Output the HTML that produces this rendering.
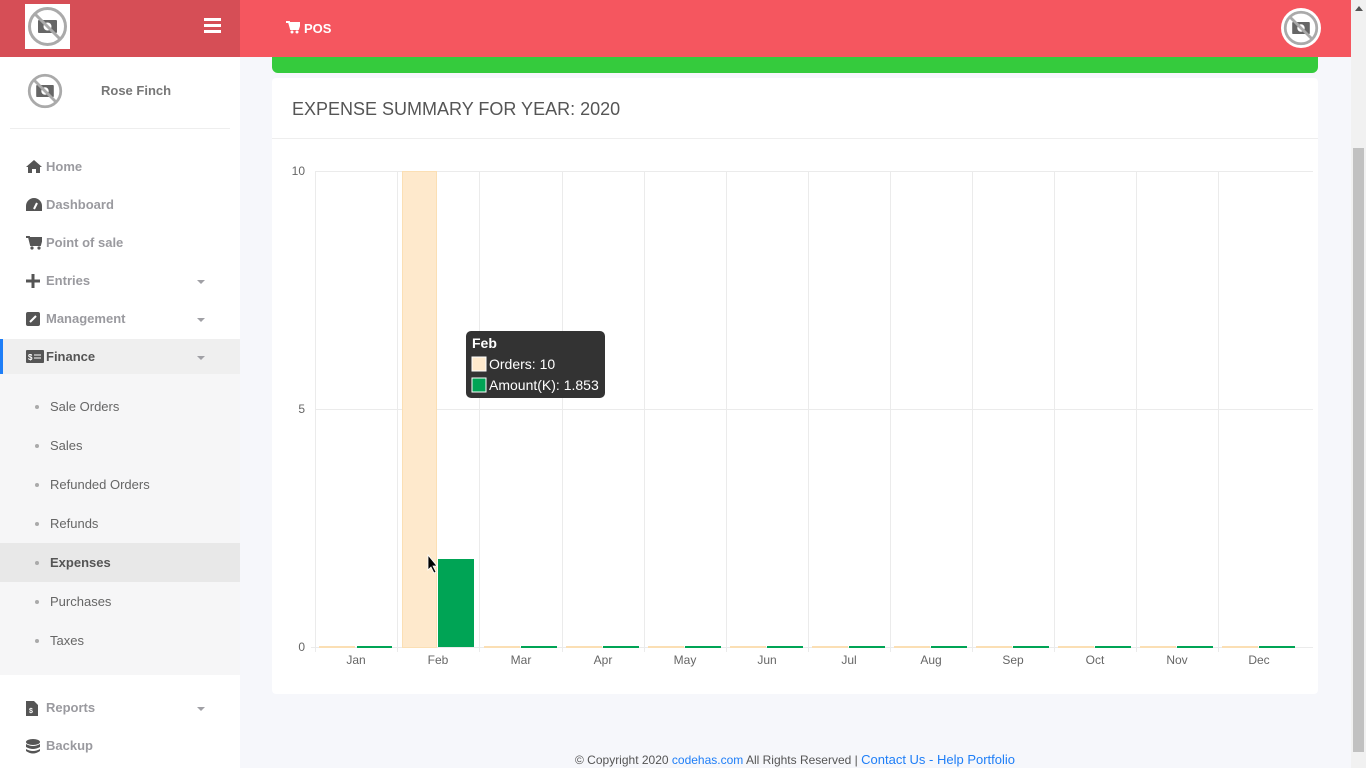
<!DOCTYPE html>
<html><head><meta charset="utf-8"><style>
*{box-sizing:border-box;margin:0;padding:0}
body{width:1366px;height:768px;overflow:hidden;font-family:"Liberation Sans",sans-serif;background:#f6f7fb;position:relative}
.tl{position:absolute;left:0;top:0;width:240px;height:57px;background:#d64e56}
.tr{position:absolute;left:240px;top:0;width:1111px;height:57px;background:#f5565f}
.side{position:absolute;left:0;top:57px;width:240px;height:711px;background:#fff}
.nav{position:absolute;left:0;width:240px;height:36px;font-size:13px;font-weight:bold;color:#9a9a9f;line-height:36px;padding-left:46px}
.nav svg{position:absolute;left:26px;top:11px}
.caret{position:absolute;left:197px;top:17px;width:0;height:0;border-left:4px solid transparent;border-right:4px solid transparent;border-top:4px solid #a0a0a5}
.sub{position:absolute;left:0;width:240px;height:39px;line-height:39px;font-size:13px;color:#666;padding-left:50px}
.sub:before{content:"";position:absolute;left:35px;top:18px;width:4px;height:4px;border-radius:50%;background:#aaa}
.sb{position:absolute;left:1351px;top:0;width:15px;height:768px;background:#f1f1f1}
</style></head><body>
<div class="tl"><div style="position:absolute;left:25px;top:4px;width:45px;height:45px;background:#fff"></div>
<svg style="position:absolute;left:27px;top:6px" width="41" height="41" viewBox="0 0 41 41"><circle cx="20.5" cy="20.5" r="18" fill="none" stroke="#aaa" stroke-width="3"/><rect x="11" y="14" width="19" height="13" rx="1" fill="#666"/><circle cx="20.5" cy="20.5" r="4" fill="#fff"/><line x1="8" y1="8" x2="33" y2="33" stroke="#aaa" stroke-width="3"/></svg>
<div style="position:absolute;left:204px;top:18px;width:17px;height:3px;background:#fff;box-shadow:0 6px 0 #fff,0 12px 0 #fff"></div></div>
<div class="tr">
<svg style="position:absolute;left:46px;top:21px" width="14" height="13" viewBox="0 0 14 13"><path d="M0 1h3l2 7h7l2-6H4" fill="none" stroke="#fff" stroke-width="2"/><rect x="4" y="3" width="9" height="4" fill="#fff"/><circle cx="6" cy="11" r="1.5" fill="#fff"/><circle cx="11" cy="11" r="1.5" fill="#fff"/></svg>
<div style="position:absolute;left:64px;top:21px;font-size:13px;font-weight:bold;color:#fff">POS</div>
<div style="position:absolute;left:1041px;top:8px;width:40px;height:40px;border-radius:50%;background:#fff"></div>
<svg style="position:absolute;left:1042px;top:9px" width="38" height="38" viewBox="0 0 41 41"><circle cx="20.5" cy="20.5" r="17" fill="none" stroke="#aaa" stroke-width="3"/><rect x="11" y="14" width="19" height="13" rx="1" fill="#666"/><circle cx="20.5" cy="20.5" r="4" fill="#fff"/><line x1="9" y1="9" x2="32" y2="32" stroke="#aaa" stroke-width="3"/></svg></div>
<div class="side">
<svg style="position:absolute;left:26px;top:15px" width="38" height="38" viewBox="0 0 41 41"><circle cx="20.5" cy="20.5" r="17" fill="none" stroke="#aaa" stroke-width="3"/><rect x="11" y="14" width="19" height="13" rx="1" fill="#666"/><circle cx="20.5" cy="20.5" r="4" fill="#fff"/><line x1="9" y1="9" x2="32" y2="32" stroke="#aaa" stroke-width="3"/></svg>
<div style="position:absolute;left:101px;top:26px;font-size:13px;font-weight:bold;color:#777">Rose Finch</div>
<div style="position:absolute;left:10px;top:71px;width:220px;height:1px;background:#eee"></div>
<div class="nav" style="top:92px"><svg width="16" height="13" viewBox="0 0 16 13"><path d="M8 0L0 7h2v6h4V9h4v4h4V7h2z" fill="#555"/></svg>Home</div>
<div class="nav" style="top:130px"><svg width="16" height="14" viewBox="0 0 16 14"><path d="M8 0a8 8 0 0 0-8 8v5h16V8a8 8 0 0 0-8-8z" fill="#555"/><path d="M8 11l3-6" stroke="#fff" stroke-width="2"/></svg>Dashboard</div>
<div class="nav" style="top:168px"><svg width="16" height="14" viewBox="0 0 16 14"><path d="M0 1h3l2 8h9l2-7H4" fill="none" stroke="#555" stroke-width="2"/><rect x="4" y="3" width="11" height="5" fill="#555"/><circle cx="6" cy="12" r="1.6" fill="#555"/><circle cx="13" cy="12" r="1.6" fill="#555"/></svg>Point of sale</div>
<div class="nav" style="top:206px"><svg width="14" height="14" viewBox="0 0 14 14"><path d="M7 0v14M0 7h14" stroke="#555" stroke-width="3"/></svg>Entries<span class="caret"></span></div>
<div class="nav" style="top:244px"><svg width="14" height="14" viewBox="0 0 14 14"><rect width="14" height="14" rx="2" fill="#555"/><path d="M4 10l6-6" stroke="#fff" stroke-width="2"/></svg>Management<span class="caret"></span></div>
<div class="nav" style="top:282px;background:#efefef;color:#555;height:35px"><div style="position:absolute;left:0;top:0;width:3px;height:35px;background:#1e7ef7"></div><svg width="18" height="13" viewBox="0 0 18 13"><rect width="18" height="13" rx="1" fill="#555"/><path d="M8 5h7M8 8h7" stroke="#fff"/><text x="2" y="10" font-size="8" fill="#fff" font-family="Liberation Sans">$</text></svg>Finance<span class="caret"></span></div>
<div style="position:absolute;left:0;top:317px;width:240px;height:301px;background:#f6f6f7"></div>
<div class="sub" style="top:330px">Sale Orders</div>
<div class="sub" style="top:369px">Sales</div>
<div class="sub" style="top:408px">Refunded Orders</div>
<div class="sub" style="top:447px">Refunds</div>
<div class="sub" style="top:486px;background:#e8e8e8;font-weight:bold;color:#555">Expenses</div>
<div class="sub" style="top:525px">Purchases</div>
<div class="sub" style="top:564px">Taxes</div>
<div class="nav" style="top:633px"><svg width="12" height="15" viewBox="0 0 12 15"><path d="M0 0h8l4 4v11H0z" fill="#555"/><text x="3" y="12" font-size="7" fill="#fff" font-family="Liberation Sans">$</text></svg>Reports<span class="caret"></span></div>
<div class="nav" style="top:671px"><svg width="14" height="15" viewBox="0 0 14 15"><ellipse cx="7" cy="3" rx="7" ry="3" fill="#555"/><path d="M0 5q7 4 14 0v3q-7 4-14 0zM0 10q7 4 14 0v2q-7 5-14 0z" fill="#555"/></svg>Backup</div>
</div>
<div style="position:absolute;left:272px;top:57px;width:1046px;height:16px;background:#35cb3d;border-radius:0 0 6px 6px"></div>
<div style="position:absolute;left:272px;top:78px;width:1046px;height:616px;background:#fff;border-radius:4px">
<div style="position:absolute;left:20px;top:21px;font-size:18px;color:#555">EXPENSE SUMMARY FOR YEAR: 2020</div>
<div style="position:absolute;left:0;top:60px;width:1046px;height:1px;background:#eee"></div></div>
<svg style="position:absolute;left:0;top:0" width="1366" height="768">
<g stroke="#ebebeb" stroke-width="1">
<line x1="315" y1="171.5" x2="1313" y2="171.5"/><line x1="315" y1="409.5" x2="1313" y2="409.5"/><line x1="311" y1="647.5" x2="1313" y2="647.5"/>
<line x1="315.5" y1="171" x2="315.5" y2="652"/><line x1="397.5" y1="171" x2="397.5" y2="652"/><line x1="479.5" y1="171" x2="479.5" y2="652"/><line x1="562.5" y1="171" x2="562.5" y2="652"/><line x1="644.5" y1="171" x2="644.5" y2="652"/><line x1="726.5" y1="171" x2="726.5" y2="652"/><line x1="808.5" y1="171" x2="808.5" y2="652"/><line x1="890.5" y1="171" x2="890.5" y2="652"/><line x1="972.5" y1="171" x2="972.5" y2="652"/><line x1="1054.5" y1="171" x2="1054.5" y2="652"/><line x1="1136.5" y1="171" x2="1136.5" y2="652"/><line x1="1218.5" y1="171" x2="1218.5" y2="652"/>
</g>
<g font-family="Liberation Sans" font-size="12" fill="#666" text-anchor="end"><text x="305" y="175">10</text><text x="305" y="413">5</text><text x="305" y="651">0</text></g>
<g font-family="Liberation Sans" font-size="12" fill="#666" text-anchor="middle">
<text x="356" y="664">Jan</text><text x="438" y="664">Feb</text><text x="521" y="664">Mar</text><text x="603" y="664">Apr</text><text x="685" y="664">May</text><text x="767" y="664">Jun</text><text x="849" y="664">Jul</text><text x="931" y="664">Aug</text><text x="1013" y="664">Sep</text><text x="1095" y="664">Oct</text><text x="1177" y="664">Nov</text><text x="1259" y="664">Dec</text></g>
<rect x="402.5" y="171.5" width="34" height="476" fill="#fee9cc" stroke="#fbdfb4"/>
<rect x="438" y="559" width="36" height="88" fill="#00a455"/>
<g fill="#fbdfb4"><rect x="319" y="646" width="36" height="2"/><rect x="484" y="646" width="36" height="2"/><rect x="566" y="646" width="36" height="2"/><rect x="648" y="646" width="36" height="2"/><rect x="730" y="646" width="36" height="2"/><rect x="812" y="646" width="36" height="2"/><rect x="894" y="646" width="36" height="2"/><rect x="976" y="646" width="36" height="2"/><rect x="1058" y="646" width="36" height="2"/><rect x="1140" y="646" width="36" height="2"/><rect x="1222" y="646" width="36" height="2"/></g>
<g fill="#00a455"><rect x="357" y="646" width="35" height="2"/><rect x="521" y="646" width="36" height="2"/><rect x="603" y="646" width="36" height="2"/><rect x="685" y="646" width="36" height="2"/><rect x="767" y="646" width="36" height="2"/><rect x="849" y="646" width="36" height="2"/><rect x="931" y="646" width="36" height="2"/><rect x="1013" y="646" width="36" height="2"/><rect x="1095" y="646" width="36" height="2"/><rect x="1177" y="646" width="36" height="2"/><rect x="1259" y="646" width="36" height="2"/></g>
<rect x="466" y="331" width="139" height="67" rx="5" fill="#333"/>
<text x="472" y="348" font-family="Liberation Sans" font-size="14" font-weight="bold" fill="#fff">Feb</text>
<rect x="472" y="357" width="14" height="14" fill="#fee9cc" stroke="#fff" stroke-width="1"/>
<text x="489" y="369" font-family="Liberation Sans" font-size="14" fill="#fff">Orders: 10</text>
<rect x="472" y="378" width="14" height="14" fill="#00a455" stroke="#fff" stroke-width="1"/>
<text x="489" y="390" font-family="Liberation Sans" font-size="14" fill="#fff">Amount(K): 1.853</text>
<path d="M428 555v15l3-3 3 6 2-1-3-6h4z" fill="#000" stroke="#fff" stroke-width="0.8"/>
</svg>
<div style="position:absolute;left:575px;top:752px;font-size:12px;color:#555;white-space:nowrap">© Copyright 2020 <span style="color:#1e7ef7">codehas.com</span> All Rights Reserved | <span style="color:#1e7ef7;font-size:13px">Contact Us - Help Portfolio</span></div>
<div class="sb"><div style="position:absolute;left:4px;top:6px;border-left:4px solid transparent;border-right:4px solid transparent;border-bottom:5px solid #555"></div><div style="position:absolute;left:2px;top:148px;width:11px;height:604px;background:#c1c1c1"></div></div>
</body></html>
